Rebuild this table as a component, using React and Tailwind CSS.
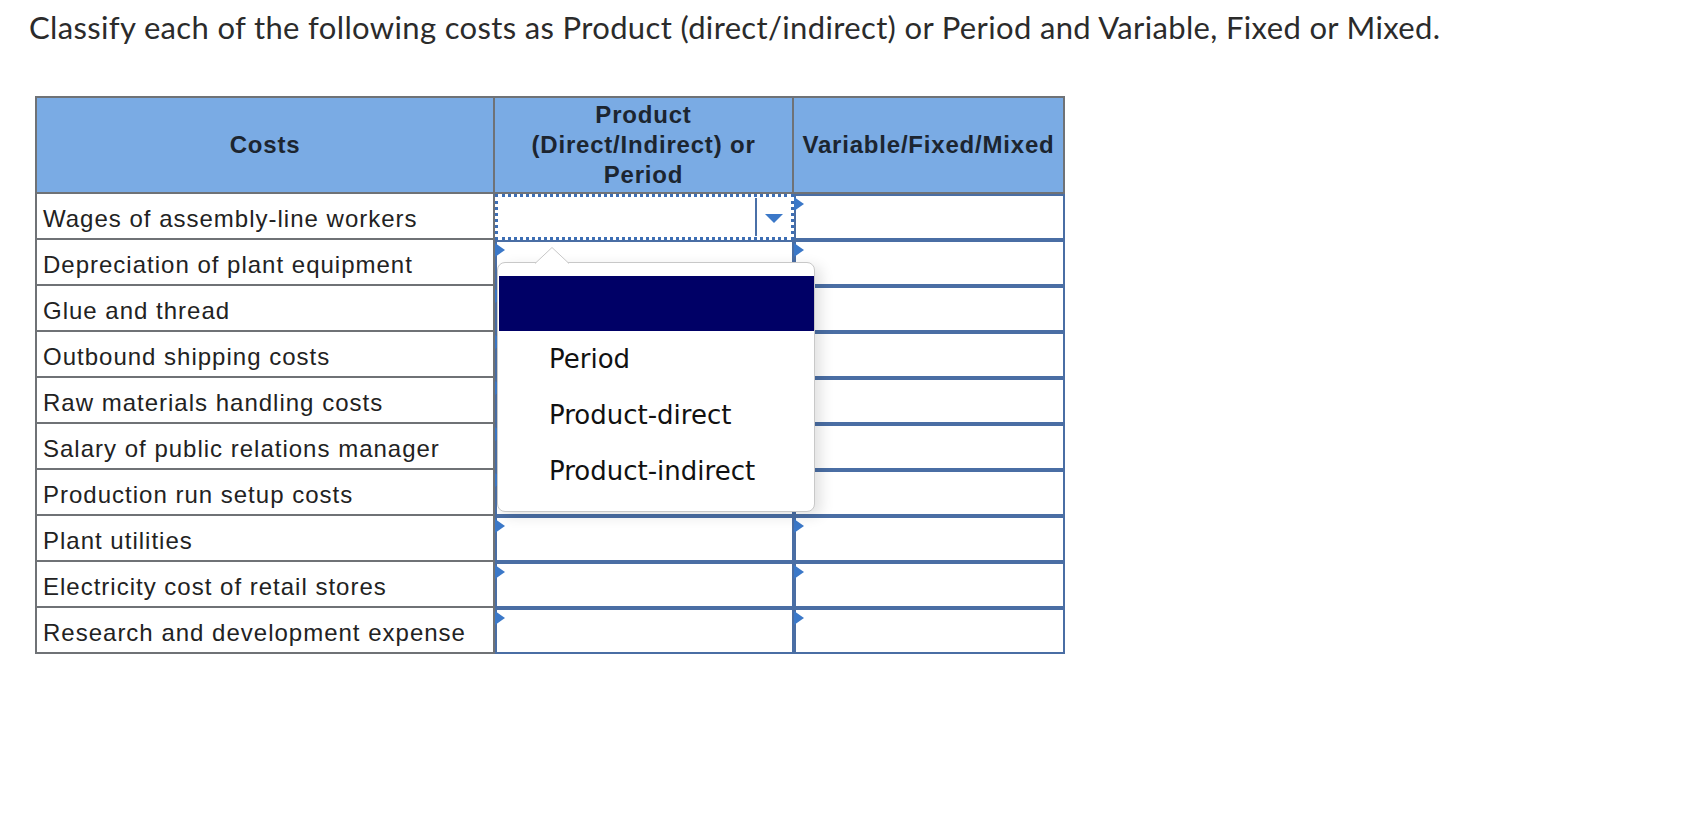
import React from 'react'

const costs = [
  'Wages of assembly-line workers',
  'Depreciation of plant equipment',
  'Glue and thread',
  'Outbound shipping costs',
  'Raw materials handling costs',
  'Salary of public relations manager',
  'Production run setup costs',
  'Plant utilities',
  'Electricity cost of retail stores',
  'Research and development expense',
]

const options = ['Period', 'Product-direct', 'Product-indirect']

function Marker() {
  return (
    <span className="absolute left-0 top-[3px] z-10 h-0 w-0 border-y-[7px] border-l-[10px] border-y-transparent border-l-[#3b78c8]" />
  )
}

function FocusedSelect() {
  return (
    <div className="relative h-full border-[3px] border-dotted border-[#3d6eb4] bg-white">
      <span className="absolute right-[34px] top-[1px] bottom-[1px] w-[2px] bg-[#4a70a8]" />
      <span className="absolute right-[8px] top-[17px] h-0 w-0 border-x-[9px] border-t-[9px] border-x-transparent border-t-[#3b78c8]" />
    </div>
  )
}

function Popup() {
  return (
    <div className="absolute left-[462px] top-[166px] z-20 h-[250px] w-[318px] rounded-[8px] border border-[#c8c8c8] bg-white shadow-[6px_4px_14px_rgba(0,0,0,0.12)] font-['DejaVu_Sans',Verdana,sans-serif]">
      <svg className="absolute left-[37px] top-[-16px]" width="36" height="17" viewBox="0 0 36 17">
        <path d="M0 16.5 L17 0.5 L34 16.5" fill="white" stroke="#c8c8c8" strokeWidth="1" />
        <rect x="1" y="16" width="32" height="2" fill="white" />
      </svg>
      <div className="ml-[1px] mt-[13px] h-[55px] bg-[#000066]" />
      {options.map((o) => (
        <div key={o} className="flex h-[56px] items-center pl-[51px] text-[26px] text-[#111]">
          {o}
        </div>
      ))}
    </div>
  )
}

export default function App() {
  return (
    <div className="min-h-screen bg-white font-['Liberation_Sans',Arial,sans-serif] text-[#222]">
      <h1 className="pl-[29px] pt-[10px] text-[31px] leading-[34px] tracking-[0.35px] text-[#2b2b2b] font-['Lato',sans-serif]">
        Classify each of the following costs as Product (direct/indirect) or Period and Variable, Fixed or Mixed.
      </h1>

      <div className="relative ml-[35px] mt-[52px] w-[1030px]">
        {/* header */}
        <div className="flex h-[98px] border-2 border-[#6f7276] bg-[#7aabe4] text-[24px] font-bold tracking-[0.8px] text-[#1c2530]">
          <div className="flex w-[458px] items-center justify-center border-r-2 border-[#6f7276]">Costs</div>
          <div className="flex w-[299px] flex-col items-center justify-center border-r-2 border-[#6f7276] text-center leading-[30px]">
            <span>Product</span>
            <span>(Direct/Indirect) or</span>
            <span>Period</span>
          </div>
          <div className="flex flex-1 items-center justify-center">Variable/Fixed/Mixed</div>
        </div>

        {/* rows */}
        {costs.map((c, i) => (
          <div key={c} className="flex h-[46px]">
            <div className="flex w-[460px] items-center border-x-2 border-b-2 border-[#6f7276] pl-[6px] pt-[6px] text-[24px] tracking-[1px]">
              {c}
            </div>
            <div className="relative w-[299px]">
              {i === 0 ? (
                <FocusedSelect />
              ) : (
                <>
                  <Marker />
                  <div className="h-full border-2 border-[#4a6ea4] bg-white" />
                </>
              )}
            </div>
            <div className="relative w-[271px]">
              <Marker />
              <div className="h-full border-2 border-[#4a6ea4] bg-white" />
            </div>
          </div>
        ))}

        <Popup />
      </div>
    </div>
  )
}
